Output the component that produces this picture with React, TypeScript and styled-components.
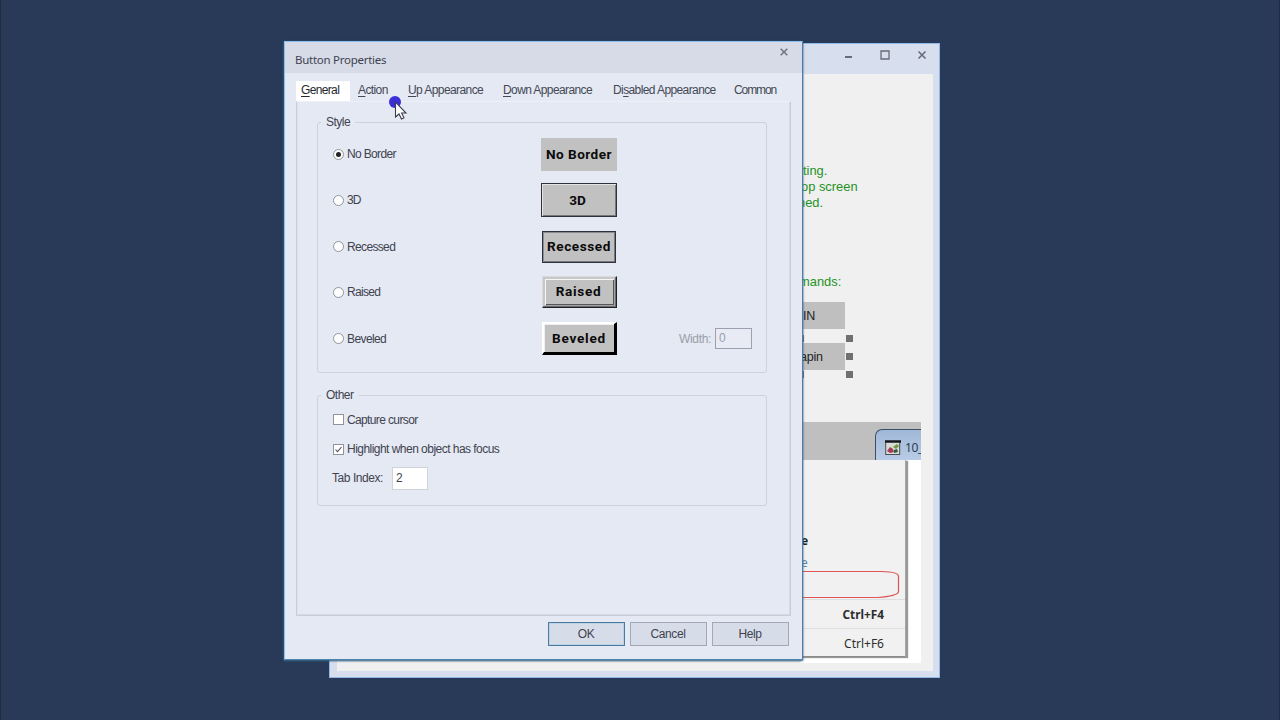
import React from 'react';
import styled, { createGlobalStyle, css } from 'styled-components';

const Global = createGlobalStyle`
  * { box-sizing: border-box; }
  body { margin: 0; overflow: hidden; background: #283a57; }
`;

const Desktop = styled.div`
  position: relative;
  width: 1280px;
  height: 720px;
  overflow: hidden;
  background: #283a57;
  border-left: 1px solid #1f2c42;
  border-right: 1px solid #1f2c42;
  font-family: 'Liberation Sans', Arial, sans-serif;
  font-size: 12px;
  color: #3f4350;
`;

/* ---------- editor window ---------- */

const EditorWindow = styled.section`
  position: absolute;
  left: 328px;
  top: 43px;
  width: 611px;
  height: 635px;
  display: flex;
  flex-direction: column;
  background: #d7deee;
  border: 1px solid #8fb9e6;
  padding: 0 6px 6px 7px;
`;

const EditorTitle = styled.header`
  flex: 0 0 30px;
  display: flex;
  justify-content: flex-end;
  align-items: flex-start;
  gap: 27px;
  padding: 5px 6px 0 0;
`;

const Client = styled.div`
  flex: 1;
  display: flex;
  flex-direction: column;
  overflow: hidden;
  background: #f0f0f0;
  padding-left: 463px;
`;

const Note = styled.p<{ $top: number; $indent?: number }>`
  margin: ${p => p.$top}px 0 0 ${p => p.$indent ?? 0}px;
  font-size: 12.9px;
  line-height: 16px;
  color: #1f9224;
  white-space: pre;
`;

const Pad = styled.div<{ $top: number; $indent: number }>`
  position: relative;
  width: 45px;
  height: 27px;
  margin-top: ${p => p.$top}px;
  padding-left: ${p => p.$indent}px;
  background: #bfbfbf;
  color: #222;
  font-size: 12.5px;
  letter-spacing: -0.2px;
  line-height: 29px;
`;

const Handle = styled.i<{ $x: number; $y: number }>`
  position: absolute;
  left: ${p => p.$x}px;
  top: ${p => p.$y}px;
  width: 7px;
  height: 7px;
  background: #707070;
`;

const TabStrip = styled.div`
  width: 121px;
  height: 38px;
  margin-top: 52px;
  display: flex;
  justify-content: flex-end;
  align-items: flex-end;
  overflow: hidden;
  background: #bfbfbf;
`;

const FileTab = styled.div`
  width: 46px;
  height: 31px;
  flex: none;
  display: flex;
  align-items: center;
  gap: 4px;
  padding: 5px 0 0 9px;
  border: 1px solid #3f4d63;
  border-right: 0;
  border-bottom: 0;
  border-radius: 7px 0 0 0;
  background: linear-gradient(#a0b8d8, #b9cce6);
  color: #2b3a50;
  font-family: 'Noto Sans', sans-serif;
  font-size: 12px;
  letter-spacing: -0.4px;
  overflow: hidden;
`;

const Sheet = styled.div`
  width: 121px;
  height: 203px;
  background: #fff;
`;

const ContextMenu = styled.div`
  width: 106px;
  height: 197px;
  display: flex;
  flex-direction: column;
  padding-top: 72px;
  background: #f1f1f1;
  border-right: 1px solid #a5a5a5;
  border-bottom: 1px solid #8b8b8b;
  box-shadow: 2px 1px 1px #999;
  color: #2e2e2e;
  font-family: 'Noto Sans', sans-serif;
  font-size: 12px;
`;

const MenuTail = styled.div<{ $blue?: boolean }>`
  height: 22px;
  line-height: ${p => (p.$blue ? 27 : 17)}px;
  padding-left: 1px;
  font-weight: ${p => (p.$blue ? 400 : 700)};
  color: ${p => (p.$blue ? '#5f84a8' : '#222')};
`;

const Outline = styled.svg`
  display: block;
  flex: none;
  margin-top: -6px;
`;

const Shortcut = styled.div<{ $bold?: boolean }>`
  height: 29px;
  line-height: ${p => (p.$bold ? 28 : 30)}px;
  padding-right: 21px;
  text-align: right;
  border-top: 1px solid #dedede;
  font-size: ${p => (p.$bold ? 11.8 : 12)}px;
  font-weight: ${p => (p.$bold ? 700 : 400)};
`;

/* ---------- properties dialog ---------- */

const Dialog = styled.section`
  position: absolute;
  left: 283px;
  top: 41px;
  width: 519px;
  height: 619px;
  display: flex;
  flex-direction: column;
  background: #e5e9f3;
  border: 1px solid #8cc0ea;
  border-right-color: #4a7eb0;
  border-bottom-color: #4a86b0;
  box-shadow: 0 1px 2px #3a6486, -1px 0 2px #22506f;
`;

const DialogTitle = styled.header`
  flex: 0 0 30px;
  display: flex;
  justify-content: space-between;
  padding: 5px 14px 0 10px;
  background: #d6dbe7;
  font-family: 'Noto Sans', sans-serif;
  font-size: 11.5px;
  letter-spacing: -0.27px;
  line-height: 26px;
`;

const Tabs = styled.nav`
  flex: none;
  display: flex;
  height: 20px;
  margin: 8px 0 0 11px;
`;

const Tab = styled.div<{ $w: number; $ls: number; $active?: boolean }>`
  width: ${p => p.$w}px;
  height: 20px;
  padding-left: 5px;
  line-height: 19px;
  white-space: nowrap;
  letter-spacing: ${p => p.$ls}px;
  color: ${p => (p.$active ? '#25272e' : '#444855')};
  ${p => p.$active && css`background: #fff; margin-right: 3px;`}
  u { text-underline-offset: 2px; text-decoration-thickness: 1px; }
`;

const Page = styled.div`
  flex: none;
  width: 495px;
  height: 515px;
  margin-left: 11px;
  padding: 13px 23px 0 20px;
  border: 1px solid #c9cdd9;
  border-top-color: #eef0f7;
  box-shadow: inset 1px 0 #dde1ec, inset -1px -1px #d5d9e4;
`;

const Group = styled.fieldset<{ $h: number; $top?: number }>`
  height: ${p => p.$h}px;
  min-width: 0;
  margin: ${p => p.$top ?? 0}px 0 0;
  padding: 0 14px 0 14px;
  border: 1px solid #ccd1dc;
  border-radius: 3px;
`;

const Legend = styled.legend`
  height: 14px;
  margin-left: -11px;
  padding: 0 5px;
  line-height: 15px;
  letter-spacing: -0.5px;
`;

const StyleRow = styled.div<{ $h: number }>`
  display: flex;
  align-items: center;
  height: ${p => p.$h}px;
`;

const Choice = styled.label<{ $ls: number; $w?: number }>`
  display: flex;
  align-items: center;
  gap: 3px;
  width: ${p => (p.$w ? p.$w + 'px' : 'auto')};
  padding-left: 1px;
  white-space: nowrap;
  letter-spacing: ${p => p.$ls}px;
`;

const Radio = styled.span<{ $on?: boolean }>`
  flex: none;
  display: grid;
  place-items: center;
  width: 11px;
  height: 11px;
  border: 1px solid #8f949d;
  border-radius: 50%;
  background: #fff;
  &::after {
    content: '';
    width: 5px;
    height: 5px;
    border-radius: 50%;
    background: ${p => (p.$on ? '#222' : 'transparent')};
  }
`;

const Check = styled.span`
  flex: none;
  display: grid;
  place-items: center;
  width: 11px;
  height: 11px;
  border: 1px solid #8f949d;
  background: #fff;
`;

type Look = 'flat' | 'three' | 'recessed' | 'raised' | 'beveled';

const looks: Record<Look, ReturnType<typeof css>> = {
  flat: css`height: 33px; width: 76px;`,
  three: css`
    height: 34px; width: 76px;
    padding-right: 3px;
    border: 1px solid #30323c;
    box-shadow: inset 1px 1px #e4e4e6, inset -1px -1px #77777c;
  `,
  recessed: css`
    height: 32px; width: 74px; margin-left: 1px;
    border: 1px solid #30323c;
    box-shadow: inset 1px 1px #8a8a90, inset -1px -1px #77777c;
  `,
  raised: css`
    height: 32px; width: 75px;
    margin-left: 1px;
    padding: 0 2px 2px 0;
    border: 1px solid #d8d9dd;
    border-right-color: #202024; border-bottom-color: #202024;
    box-shadow: inset -1px -1px #6c6c70, inset 2px 2px #c8c8c8, inset -2px -2px #a5a5a5,
      inset 3px 3px #f6f6f6, inset -3px -3px #55555a;
  `,
  beveled: css`
    height: 33px; width: 75px; margin-left: 1px;
    border: 2px solid #fff;
    border-right: 3px solid #000; border-bottom: 3px solid #000;
    box-shadow: inset 1px 1px #eee;
  `,
};

const Sample = styled.div<{ $look: Look; $ls: number }>`
  display: flex;
  align-items: center;
  justify-content: center;
  background: #c1c1c1;
  color: #0b0b0b;
  font-family: Roboto, sans-serif;
  font-size: 13.6px;
  font-weight: 700;
  line-height: 15px;
  letter-spacing: ${p => p.$ls}px;
  white-space: nowrap;
  ${p => looks[p.$look]}
`;

const WidthField = styled.div`
  margin-left: auto;
  display: flex;
  align-items: center;
  gap: 4px;
  color: #9a9daa;
  letter-spacing: -0.35px;
`;

const Input = styled.div<{ $off?: boolean }>`
  width: ${p => (p.$off ? 37 : 36)}px;
  height: ${p => (p.$off ? 21 : 23)}px;
  padding-left: 3px;
  line-height: ${p => (p.$off ? 19 : 20)}px;
  border: 1px solid ${p => (p.$off ? '#9da0b0' : '#d0d3dc')};
  background: ${p => (p.$off ? '#e8ebf4' : '#fff')};
`;

const OtherRow = styled.div<{ $h: number }>`
  display: flex;
  align-items: center;
  gap: 9px;
  height: ${p => p.$h}px;
`;

const FieldName = styled.span`
  letter-spacing: -0.45px;
`;

const Footer = styled.footer`
  display: flex;
  justify-content: flex-end;
  gap: 5px;
  padding: 6px 13px 0 0;
`;

const Button = styled.button<{ $main?: boolean }>`
  width: 77px;
  height: 24px;
  padding: 0 1px 0 0;
  border: 1px solid ${p => (p.$main ? '#4b7a9e' : '#a3a8b8')};
  box-shadow: ${p => (p.$main ? 'inset 0 0 0 1px #b9d3e6' : 'none')};
  background: #d7dce9;
  color: #3f4350;
  font: 12px 'Liberation Sans', Arial, sans-serif;
  letter-spacing: -0.4px;
`;

const Pointer = styled.svg`
  position: absolute;
  left: 386px;
  top: 94px;
`;

const Glyph = styled.svg`
  flex: none;
`;

const styleRows: { name: string; ls: number; look: Look; sls: number; h: number }[] = [
  { name: 'No Border', ls: -0.65, look: 'flat', sls: 0.45, h: 50 },
  { name: '3D', ls: -0.8, look: 'three', sls: 0, h: 42 },
  { name: 'Recessed', ls: -0.65, look: 'recessed', sls: 0.55, h: 51 },
  { name: 'Raised', ls: -0.7, look: 'raised', sls: 0.65, h: 40 },
  { name: 'Beveled', ls: -0.6, look: 'beveled', sls: 0.75, h: 53 },
];

const CloseIcon = () => (
  <Glyph width="8" height="10" viewBox="0 -1 8 10">
    <path d="M.7.7l6.6 6.6M7.3.7L.7 7.3" stroke="#74767f" strokeWidth="1.6" />
  </Glyph>
);

export default function App() {
  return (
    <Desktop>
      <Global />
      <EditorWindow>
        <EditorTitle>
          <svg width="9" height="12"><path d="M1 8h7" stroke="#696b75" strokeWidth="2" /></svg>
          <svg width="10" height="12"><path d="M1 2h8v8H1z" fill="none" stroke="#696b75" strokeWidth="1.3" /></svg>
          <svg width="10" height="12"><path d="M1.5 2.5l7 7M8.5 2.5l-7 7" stroke="#696b75" strokeWidth="1.6" /></svg>
        </EditorTitle>
        <Client>
          <Note $top={89} $indent={3}>ting.</Note>
          <Note $top={0} $indent={1}>op screen</Note>
          <Note $top={0} $indent={-2}>ned.</Note>
          <Note $top={63} $indent={-1}>mands:</Note>
          <Pad $top={12} $indent={3}>IN</Pad>
          <Pad $top={14} $indent={-1}>
            apin
            <Handle $x={46} $y={-8} />
            <Handle $x={46} $y={10} />
            <Handle $x={46} $y={28} />
            <Handle $x={-3} $y={-8} />
            <Handle $x={-3} $y={28} />
          </Pad>
          <TabStrip>
            <FileTab>
              <Glyph width="16" height="15" viewBox="0 0 16 15">
                <rect x=".7" y="1.5" width="14" height="13" fill="#d9dcd6" stroke="#4d4d55" />
                <path d="M0 1.5h16" stroke="#15171c" strokeWidth="2.4" />
                <path d="M2 11l3-4 3 2 1 3-4 1z" fill="#a43a5e" />
                <path d="M8 7l4-3 2 2-3 3z" fill="#6f9a3e" />
                <path d="M9 10l3-1 1 3-4 1z" fill="#27603a" />
              </Glyph>
              10_
            </FileTab>
          </TabStrip>
          <Sheet>
            <ContextMenu>
              <MenuTail>e</MenuTail>
              <MenuTail $blue>e</MenuTail>
              <Outline width="103" height="34" viewBox="0 -5 103 34">
                <path d="M0 1.500H82Q98 2 98.500 6V22Q97 26 78 27.500H0" fill="none" stroke="#dd5555" strokeWidth="1.2" />
              </Outline>
              <Shortcut $bold>Ctrl+F4</Shortcut>
              <Shortcut>Ctrl+F6</Shortcut>
            </ContextMenu>
          </Sheet>
        </Client>
      </EditorWindow>

      <Dialog>
        <DialogTitle>
          Button Properties
          <CloseIcon />
        </DialogTitle>
        <Tabs>
          <Tab $w={54} $ls={-0.65} $active><u>G</u>eneral</Tab>
          <Tab $w={50} $ls={-0.6}><u>A</u>ction</Tab>
          <Tab $w={95} $ls={-0.58}><u>U</u>p Appearance</Tab>
          <Tab $w={110} $ls={-0.6}><u>D</u>own Appearance</Tab>
          <Tab $w={121} $ls={-0.6}>Di<u>s</u>abled Appearance</Tab>
          <Tab $w={56} $ls={-1.1}>Common</Tab>
        </Tabs>
        <Page>
          <Group $h={258}>
            <Legend>Style</Legend>
            {styleRows.map(r => (
              <StyleRow key={r.name} $h={r.h}>
                <Choice $w={209} $ls={r.ls}>
                  <Radio $on={r.look === 'flat'} />
                  {r.name}
                </Choice>
                <Sample $look={r.look} $ls={r.sls}>{r.name}</Sample>
                {r.look === 'beveled' && (
                  <WidthField>Width:<Input $off>0</Input></WidthField>
                )}
              </StyleRow>
            ))}
          </Group>
          <Group $h={118} $top={15}>
            <Legend>Other</Legend>
            <OtherRow $h={35}><Choice $ls={-0.63}><Check />Capture cursor</Choice></OtherRow>
            <OtherRow $h={24}>
              <Choice $ls={-0.53}>
                <Check>
                  <svg width="9" height="9" viewBox="0 0 9 9"><path d="M1.500 4.500l2 2.200L7.500 2" fill="none" stroke="#50535c" strokeWidth="1.100" /></svg>
                </Check>
                Highlight when object has focus
              </Choice>
            </OtherRow>
            <OtherRow $h={34}><FieldName>Tab Index:</FieldName><Input>2</Input></OtherRow>
          </Group>
        </Page>
        <Footer>
          <Button $main>OK</Button>
          <Button>Cancel</Button>
          <Button>Help</Button>
        </Footer>
      </Dialog>

      <Pointer width="24" height="30" viewBox="0 0 24 30">
        <circle cx="8" cy="8" r="6" fill="#3a2fd8" />
        <path d="M8.500 8v15l3.500-3 2.500 5 2.500-1.200-2.400-4.800h4.400z" fill="#fff" stroke="#3c3e4c" strokeWidth="1.100" />
      </Pointer>
    </Desktop>
  );
}
